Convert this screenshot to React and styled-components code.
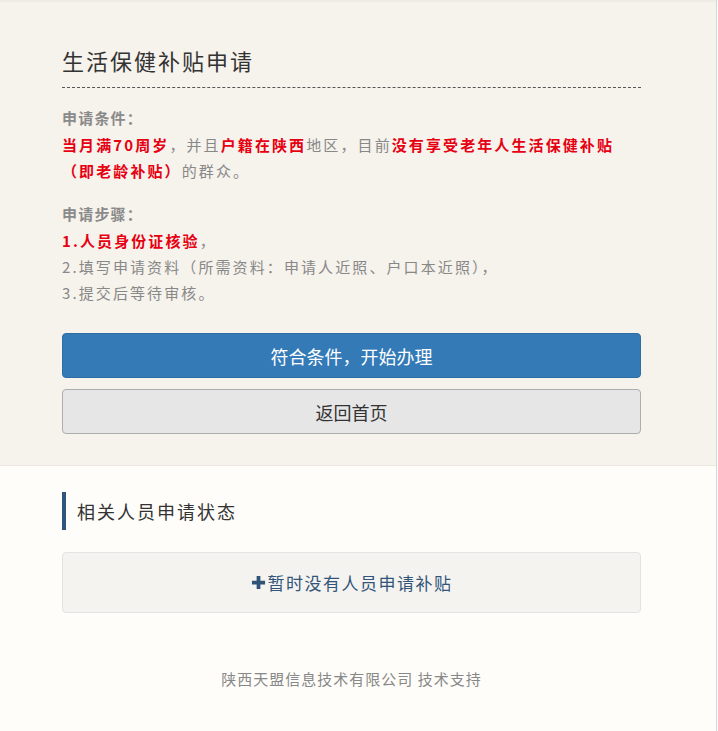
import React from "react";
import styled, { createGlobalStyle } from "styled-components";

const GlobalStyle = createGlobalStyle`
  html, body {
    margin: 0;
    padding: 0;
    background: #fefdf9;
  }
  body {
    font-family: "Noto Sans CJK SC", "Noto Sans", "Liberation Sans", sans-serif;
  }
`;

const Page = styled.div`
  display: flex;
  min-height: 731px;
`;

const Main = styled.div`
  width: 716px;
  display: flex;
  flex-direction: column;
`;

const Edge = styled.div`
  flex: 1;
  border-left: 1px solid #d6d6d6;
  background: #fbfbfb;
`;

const TopSection = styled.section`
  background: #f6f2ec;
  border-top: 2px solid #f1ebe5;
  padding: 40px 75px 31px 62px;
  border-bottom: 1px solid #ece7e0;
`;

const Title = styled.h2`
  margin: 0;
  padding-bottom: 9px;
  font-size: 22px;
  line-height: 36px;
  font-weight: 400;
  letter-spacing: 2px;
  color: #333;
  border-bottom: 1px dashed #555;
`;

const Block = styled.div`
  margin-top: 17px;
  font-size: 15px;
  line-height: 26px;
  letter-spacing: 2.1px;
  color: #888;
`;

const Label = styled.div`
  margin-bottom: 1px;
  font-weight: 700;
  letter-spacing: 1.2px;
  color: #8a8a8a;
`;

const Red = styled.span`
  font-weight: 700;
  color: #e60012;
`;

const Line = styled.div``;

const Buttons = styled.div`
  margin-top: 27px;
  display: flex;
  flex-direction: column;
  gap: 11px;
`;

const Button = styled.button`
  height: 45px;
  width: 100%;
  border-radius: 4px;
  font-family: inherit;
  font-size: 18px;
  cursor: pointer;
  border: 1px solid ${(p) => (p.$primary ? "#2e6da4" : "#adadad")};
  background: ${(p) => (p.$primary ? "#337ab7" : "#e6e6e6")};
  color: ${(p) => (p.$primary ? "#fff" : "#333")};
`;

const BottomSection = styled.section`
  padding: 26px 75px 0 62px;
  display: flex;
  flex-direction: column;
`;

const SubTitle = styled.h3`
  margin: 0;
  height: 38px;
  display: flex;
  align-items: center;
  padding-left: 11px;
  border-left: 4px solid #2f557f;
  font-size: 18px;
  font-weight: 400;
  letter-spacing: 2px;
  color: #333;
`;

const EmptyBox = styled.div`
  margin-top: 22px;
  height: 59px;
  border: 1px solid #e3e3e3;
  border-radius: 4px;
  background: #f5f3ef;
  display: flex;
  align-items: center;
  justify-content: center;
  gap: 2px;
  font-size: 17px;
  letter-spacing: 1.5px;
  color: #31557a;
`;

const PlusIcon = styled.svg`
  width: 15px;
  height: 15px;
  margin-top: -1px;
`;

const Footer = styled.div`
  margin-top: 56px;
  text-align: center;
  font-size: 15px;
  line-height: 20px;
  letter-spacing: 1px;
  color: #888;
`;

export default function App() {
  return (
    <>
      <GlobalStyle />
      <Page>
        <Main>
          <TopSection>
            <Title>生活保健补贴申请</Title>
            <Block>
              <Label>申请条件：</Label>
              <Line>
                <Red>当月满70周岁</Red>，并且<Red>户籍在陕西</Red>地区，目前
                <Red>没有享受老年人生活保健补贴</Red>
              </Line>
              <Line>
                <Red>（即老龄补贴）</Red>的群众。
              </Line>
            </Block>
            <Block>
              <Label>申请步骤：</Label>
              <Line>
                <Red>1.人员身份证核验</Red>，
              </Line>
              <Line>2.填写申请资料（所需资料：申请人近照、户口本近照），</Line>
              <Line>3.提交后等待审核。</Line>
            </Block>
            <Buttons>
              <Button $primary>符合条件，开始办理</Button>
              <Button>返回首页</Button>
            </Buttons>
          </TopSection>
          <BottomSection>
            <SubTitle>相关人员申请状态</SubTitle>
            <EmptyBox>
              <PlusIcon viewBox="0 0 16 16" fill="#2f5377">
                <path d="M6 1h4v5h5v4h-5v5H6v-5H1V6h5z" />
              </PlusIcon>
              暂时没有人员申请补贴
            </EmptyBox>
            <Footer>陕西天盟信息技术有限公司 技术支持</Footer>
          </BottomSection>
        </Main>
        <Edge />
      </Page>
    </>
  );
}
